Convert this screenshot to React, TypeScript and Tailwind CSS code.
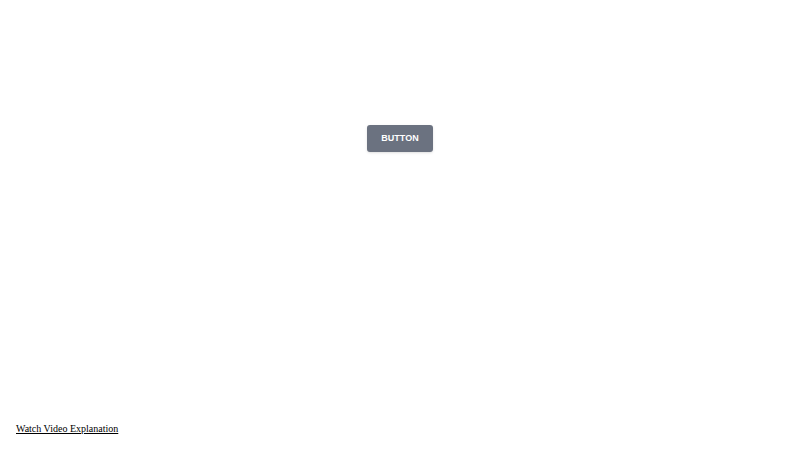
import React from 'react';

export default function App() {
  return (
    <div className="flex h-[450px] w-[800px] flex-col bg-white">
      <div className="flex flex-1 justify-center pt-[125px]">
        <button
          type="button"
          className="h-[27px] w-[66px] rounded-[3px] bg-[#6b7280] text-[9px] font-bold uppercase text-white shadow-sm"
          style={{ fontFamily: '"Liberation Sans", Arial, sans-serif' }}
        >
          Button
        </button>
      </div>
      <div className="px-4 pb-[14px] leading-[15px]">
        <a
          href="#"
          className="text-[10px] text-black underline"
          style={{ fontFamily: '"Liberation Serif", "Times New Roman", serif' }}
        >
          Watch Video Explanation
        </a>
      </div>
    </div>
  );
}
